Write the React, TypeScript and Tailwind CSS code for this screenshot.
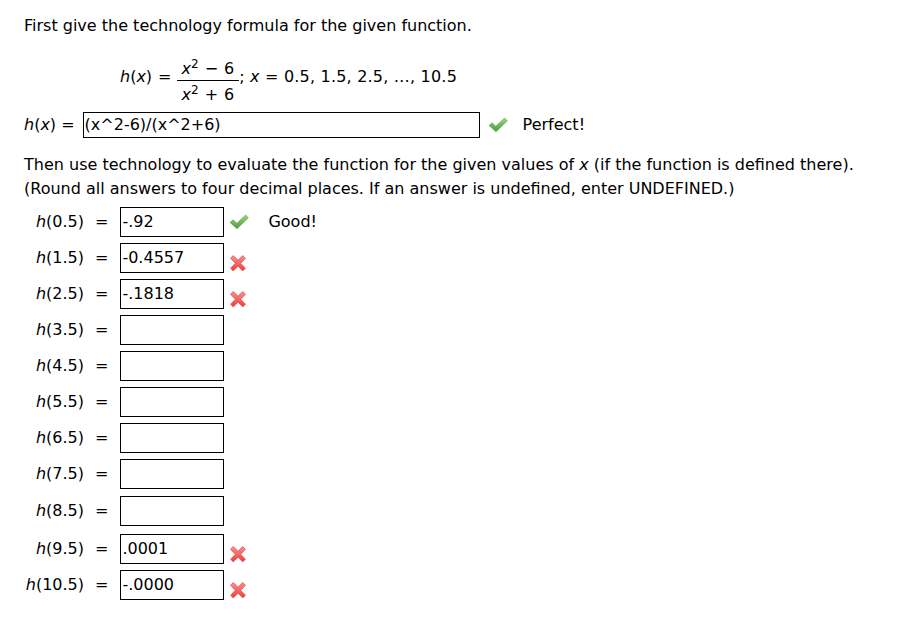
import React from "react";

function Check() {
  return (
    <svg width="20" height="16" viewBox="0 0 20 16" className="block">
      <defs>
        <linearGradient id="chk" x1="0" y1="0" x2="0" y2="1">
          <stop offset="0" stopColor="#9bd67e" />
          <stop offset="1" stopColor="#4c9b3c" />
        </linearGradient>
      </defs>
      <path d="M1 8.5 L4 5.8 L7.8 9.2 L16.6 1 L19.4 3.8 L8 14.8 Z" fill="url(#chk)" stroke="#5aa447" strokeWidth="0.6" strokeLinejoin="round" />
    </svg>
  );
}

function Cross() {
  return (
    <svg width="18" height="19" viewBox="0 0 17 18" className="block">
      <defs>
        <linearGradient id="crs" x1="0" y1="0" x2="0" y2="1">
          <stop offset="0" stopColor="#ff8f8f" />
          <stop offset="1" stopColor="#e83f3f" />
        </linearGradient>
      </defs>
      <path
        d="M1.5 4 L4 1.5 L8.5 6 L13 1.5 L15.5 4 L11 8.8 L15.5 13.5 L13 16 L8.5 11.5 L4 16 L1.5 13.5 L6 8.8 Z"
        fill="url(#crs)"
        stroke="#e85050"
        strokeWidth="0.8"
        strokeLinejoin="round"
      />
    </svg>
  );
}

type Row = { x: string; value: string; mark?: "ok" | "bad"; note?: string; gap: string };

const rows: Row[] = [
  { x: "0.5", value: "-.92", mark: "ok", note: "Good!", gap: "" },
  { x: "1.5", value: "-0.4557", mark: "bad", gap: "" },
  { x: "2.5", value: "-.1818", mark: "bad", gap: "" },
  { x: "3.5", value: "", gap: "" },
  { x: "4.5", value: "", gap: "" },
  { x: "5.5", value: "", gap: "" },
  { x: "6.5", value: "", gap: "" },
  { x: "7.5", value: "", gap: "" },
  { x: "8.5", value: "", gap: "mt-[1px]" },
  { x: "9.5", value: ".0001", mark: "bad", gap: "mt-[2px]" },
  { x: "10.5", value: "-.0000", mark: "bad", gap: "" },
];

export default function App() {
  return (
    <div
      className="min-h-screen bg-white text-black pt-[16px] pl-[24px] text-[16px] leading-[20px]"
      style={{ fontFamily: '"DejaVu Sans", Verdana, sans-serif' }}
    >
      <p>First give the technology formula for the given function.</p>

      {/* formula */}
      <div className="mt-[17px] ml-[96px] flex items-center h-[56px]">
        <span className="mb-[8px] whitespace-nowrap">
          <i>h</i>(<i>x</i>)<span className="ml-[6px]">=</span>
        </span>
        <span className="inline-flex flex-col items-center ml-[5px]">
          <span className="border-b border-black px-[5px] h-[28px] flex items-end pb-[1px] whitespace-nowrap">
            <span>
              <i>x</i>
              <sup className="text-[12px]">2</sup>
              <span className="ml-[6px]">−</span>
              <span className="ml-[6px]">6</span>
            </span>
          </span>
          <span className="h-[28px] flex items-center whitespace-nowrap">
            <span>
              <i>x</i>
              <sup className="text-[12px]">2</sup>
              <span className="ml-[6px]">+</span>
              <span className="ml-[6px]">6</span>
            </span>
          </span>
        </span>
        <span className="mb-[8px] whitespace-nowrap tracking-[0.2px]">
          ; <i>x</i> = 0.5, 1.5, 2.5, …, 10.5
        </span>
      </div>

      {/* technology formula */}
      <div className="mt-[3px] flex items-center h-[26px]">
        <span>
          <i>h</i>(<i>x</i>) =
        </span>
        <div className="ml-[8px] w-[397px] h-[26px] border border-black flex items-center pl-[1px]">
          (x^2-6)/(x^2+6)
        </div>
        <span className="ml-[8px]">
          <Check />
        </span>
        <span className="ml-[15px]">Perfect!</span>
      </div>

      <p className="mt-[15px] leading-[24px]">
        Then use technology to evaluate the function for the given values of <i>x</i> (if the function is defined
        there).
        <br />
        (Round all answers to four decimal places. If an answer is undefined, enter UNDEFINED.)
      </p>

      <div className="mt-[3px]">
        {rows.map((r) => (
          <div key={r.x} className={"flex items-center h-[36px] " + r.gap}>
            <span className="w-[60px] text-right whitespace-nowrap">
              <i>h</i>({r.x})
            </span>
            <span className="ml-[11px]">=</span>
            <div className="ml-[12px] w-[104px] h-[30px] border border-black flex items-center pl-[1px]">
              {r.value}
            </div>
            {r.mark === "ok" && (
              <span className="ml-[5px] -mt-[1px]">
                <Check />
              </span>
            )}
            {r.mark === "bad" && (
              <span className="ml-[5px] mt-[10px]">
                <Cross />
              </span>
            )}
            {r.note && <span className="ml-[19px]">{r.note}</span>}
          </div>
        ))}
      </div>
    </div>
  );
}
